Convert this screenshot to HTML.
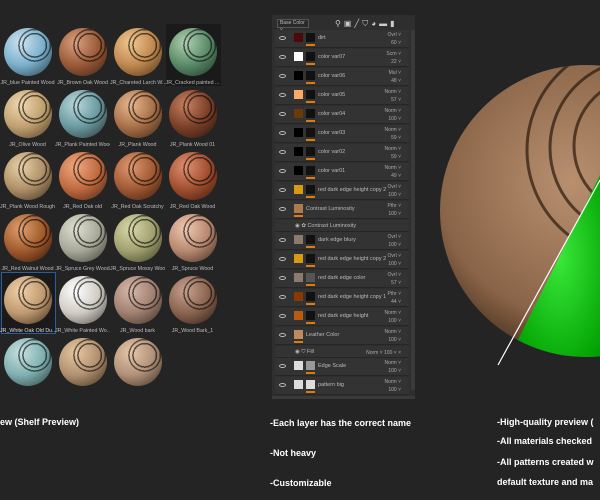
<!DOCTYPE html>
<html><head><style>
*{margin:0;padding:0;box-sizing:border-box}
body{width:600px;height:500px;background:#242424;position:relative;overflow:hidden;font-family:"Liberation Sans",sans-serif}
.s{position:absolute;width:48px;height:48px;border-radius:50%;
background:
radial-gradient(circle at 64% 36%, transparent 0 11px, rgba(0,0,0,.6) 11px 12.5px, transparent 12.5px 15px, rgba(0,0,0,.55) 15px 16.5px, transparent 16.5px),
radial-gradient(circle at 35% 30%, var(--l) 0, var(--c) 50%, var(--d) 100%);}
.lb{position:absolute;width:55px;text-align:center;font-size:5.3px;color:#bbb;white-space:nowrap;overflow:hidden;text-overflow:clip}
.sel{position:absolute;background:#1a1a1a}
.panel{position:absolute;left:272px;top:15px;width:143px;height:383px;background:#2e2e2e}
.row{position:absolute;left:275px;width:134px;height:18px;border-bottom:1px solid #262626;background:#333}
.eye{position:absolute;left:4px;top:6px;width:7px;height:4px;border:1px solid #bbb;border-radius:50%}
.t1,.t2{position:absolute;top:3px;width:9px;height:9px}
.t1{left:19px}.t2{left:31px;background:#111}
.bar{position:absolute;left:31px;top:14px;width:9px;height:2px;background:#e07a10}
.nm{position:absolute;left:43px;top:5px;font-size:5.5px;color:#bbb;white-space:nowrap}
.bm{position:absolute;right:8px;top:1px;font-size:5px;color:#aaa;text-align:right;line-height:8px}
.tx{position:absolute;color:#fff;font-weight:bold;font-size:9px;white-space:nowrap}
</style></head><body>

<div class="sel" style="left:166px;top:24px;width:55px;height:62px"></div>
<div class="sel" style="left:1px;top:272px;width:55px;height:62px;border:1px solid #2a5d9a"></div>

<div class="s" style="left:4px;top:28px;--l:#cfe3ef;--c:#7ab0cc;--d:#2a3a44"></div>
<div class="s" style="left:59px;top:28px;--l:#d9a080;--c:#9a5a38;--d:#3a2014"></div>
<div class="s" style="left:114px;top:28px;--l:#f0c890;--c:#c08850;--d:#4a3018"></div>
<div class="s" style="left:169px;top:28px;--l:#b0d0b0;--c:#5a8a68;--d:#1e3024"></div>
<div class="lb" style="left:0;top:80px">JR_blue Painted Wood</div>
<div class="lb" style="left:55px;top:80px">JR_Brown Oak Wood</div>
<div class="lb" style="left:110px;top:80px">JR_Chareted Larch W...</div>
<div class="lb" style="left:165px;top:80px">JR_Cracked painted ...</div>

<div class="s" style="left:4px;top:90px;--l:#f0d8b0;--c:#c0a070;--d:#4a3a24"></div>
<div class="s" style="left:59px;top:90px;--l:#b8d8dc;--c:#6a9aa0;--d:#2a3030"></div>
<div class="s" style="left:114px;top:90px;--l:#e8b890;--c:#a87048;--d:#3a2414"></div>
<div class="s" style="left:169px;top:90px;--l:#c88060;--c:#7a4028;--d:#2a140c"></div>
<div class="lb" style="left:0;top:142px">JR_Olive Wood</div>
<div class="lb" style="left:55px;top:142px">JR_Plank Painted Wood</div>
<div class="lb" style="left:110px;top:142px">JR_Plank Wood</div>
<div class="lb" style="left:165px;top:142px">JR_Plank Wood 01</div>

<div class="s" style="left:4px;top:152px;--l:#e8d0a8;--c:#b09068;--d:#3a2e20"></div>
<div class="s" style="left:59px;top:152px;--l:#f0a880;--c:#c06a40;--d:#4a2210"></div>
<div class="s" style="left:114px;top:152px;--l:#e09870;--c:#a05a34;--d:#3a1a0c"></div>
<div class="s" style="left:169px;top:152px;--l:#e09070;--c:#a05030;--d:#3a180a"></div>
<div class="lb" style="left:0;top:204px">JR_Plank Wood Rough</div>
<div class="lb" style="left:55px;top:204px">JR_Red Oak old</div>
<div class="lb" style="left:110px;top:204px">JR_Red Oak Scratchy</div>
<div class="lb" style="left:165px;top:204px">JR_Red Oak Wood</div>

<div class="s" style="left:4px;top:214px;--l:#e0a070;--c:#a05a2c;--d:#301408"></div>
<div class="s" style="left:59px;top:214px;--l:#e0e0d0;--c:#a8a898;--d:#3a3a34"></div>
<div class="s" style="left:114px;top:214px;--l:#d8d8a8;--c:#a0a070;--d:#3a3a24"></div>
<div class="s" style="left:169px;top:214px;--l:#f0c8b0;--c:#b88870;--d:#3a2a20"></div>
<div class="lb" style="left:0;top:266px">JR_Red Walnut Wood</div>
<div class="lb" style="left:55px;top:266px">JR_Spruce Grey Wood</div>
<div class="lb" style="left:110px;top:266px">JR_Spruce Mossy Wood</div>
<div class="lb" style="left:165px;top:266px">JR_Spruce Wood</div>

<div class="s" style="left:4px;top:276px;--l:#f0d0a8;--c:#c09a70;--d:#3a2c1c"></div>
<div class="s" style="left:59px;top:276px;--l:#ffffff;--c:#d0ccc4;--d:#4a4640"></div>
<div class="s" style="left:114px;top:276px;--l:#d8b8a8;--c:#a08070;--d:#3a2c24"></div>
<div class="s" style="left:169px;top:276px;--l:#c8a090;--c:#8a6450;--d:#2a1c14"></div>
<div class="lb" style="left:0;top:328px;color:#ddd">JR_White Oak Old Du...</div>
<div class="lb" style="left:55px;top:328px">JR_White Painted Wo...</div>
<div class="lb" style="left:110px;top:328px">JR_Wood bark</div>
<div class="lb" style="left:165px;top:328px">JR_Wood Bark_1</div>

<div class="s" style="left:4px;top:338px;--l:#c8e0e0;--c:#80b0b0;--d:#2a3a3a"></div>
<div class="s" style="left:59px;top:338px;--l:#e8c8a0;--c:#b09070;--d:#3a2c1c"></div>
<div class="s" style="left:114px;top:338px;--l:#e8c8a8;--c:#b09078;--d:#3a2c20"></div>

<div class="panel"></div>
<div style="position:absolute;left:277px;top:19px;width:32px;height:9px;border:1px solid #555;background:#2a2a2a;font-size:5px;color:#bbb;padding-left:2px;line-height:7px">Base Color ˅</div>
<div style="position:absolute;left:335px;top:19px;font-size:8px;color:#ccc;letter-spacing:3px">⚲▣╱⛉◕▬▮</div>
<div style="position:absolute;left:411px;top:30px;width:4px;height:360px;background:#3a3a3a"></div>

<div class="row" style="top:30px"><i class="eye"></i><i class="t1" style="background:#4a0a0a"></i><i class="t2"></i><i class="bar"></i><span class="nm">dirt</span><span class="bm">Ovrl ˅<br>60 ˅</span></div>
<div class="row" style="top:49px"><i class="eye"></i><i class="t1" style="background:#fff"></i><i class="t2"></i><i class="bar"></i><span class="nm">color var07</span><span class="bm">Scrn ˅<br>22 ˅</span></div>
<div class="row" style="top:68px"><i class="eye"></i><i class="t1" style="background:#000"></i><i class="t2"></i><i class="bar"></i><span class="nm">color var06</span><span class="bm">Mul ˅<br>48 ˅</span></div>
<div class="row" style="top:87px"><i class="eye"></i><i class="t1" style="background:#f8a868"></i><i class="t2"></i><i class="bar"></i><span class="nm">color var05</span><span class="bm">Norm ˅<br>57 ˅</span></div>
<div class="row" style="top:106px"><i class="eye"></i><i class="t1" style="background:#6a3a0a"></i><i class="t2"></i><i class="bar"></i><span class="nm">color var04</span><span class="bm">Norm ˅<br>100 ˅</span></div>
<div class="row" style="top:125px"><i class="eye"></i><i class="t1" style="background:#000"></i><i class="t2"></i><i class="bar"></i><span class="nm">color var03</span><span class="bm">Norm ˅<br>59 ˅</span></div>
<div class="row" style="top:144px"><i class="eye"></i><i class="t1" style="background:#000"></i><i class="t2"></i><i class="bar"></i><span class="nm">color var02</span><span class="bm">Norm ˅<br>59 ˅</span></div>
<div class="row" style="top:163px"><i class="eye"></i><i class="t1" style="background:#000"></i><i class="t2"></i><i class="bar"></i><span class="nm">color var01</span><span class="bm">Norm ˅<br>49 ˅</span></div>
<div class="row" style="top:182px"><i class="eye"></i><i class="t1" style="background:#d89a10"></i><i class="t2"></i><i class="bar"></i><span class="nm">red dark edge height copy 2</span><span class="bm">Ovrl ˅<br>100 ˅</span></div>
<div class="row" style="top:201px"><i class="eye"></i><i class="t1" style="background:#b07a50"></i><i class="bar" style="left:19px"></i><span class="nm" style="left:31px">Contrast Luminosity</span><span class="bm">Pthr ˅<br>100 ˅</span></div>
<div class="row" style="top:220px;height:12px"><span class="nm" style="left:20px;top:3px">◉ ✿ Contrast Luminosity</span></div>
<div class="row" style="top:232px"><i class="eye"></i><i class="t1" style="background:#8a7a70"></i><i class="t2"></i><i class="bar"></i><span class="nm">dark edge blury</span><span class="bm">Ovrl ˅<br>100 ˅</span></div>
<div class="row" style="top:251px"><i class="eye"></i><i class="t1" style="background:#d89a10"></i><i class="t2"></i><i class="bar"></i><span class="nm">red dark edge height copy 2</span><span class="bm">Ovrl ˅<br>100 ˅</span></div>
<div class="row" style="top:270px"><i class="eye"></i><i class="t1" style="background:#8a7a70"></i><i class="t2" style="background:#555"></i><i class="bar"></i><span class="nm">red dark edge color</span><span class="bm">Ovrl ˅<br>57 ˅</span></div>
<div class="row" style="top:289px"><i class="eye"></i><i class="t1" style="background:#8a3a00"></i><i class="t2"></i><i class="bar"></i><span class="nm">red dark edge height copy 1</span><span class="bm">Pthr ˅<br>44 ˅</span></div>
<div class="row" style="top:308px"><i class="eye"></i><i class="t1" style="background:#b85a10"></i><i class="t2"></i><i class="bar"></i><span class="nm">red dark edge height</span><span class="bm">Norm ˅<br>100 ˅</span></div>
<div class="row" style="top:327px"><i class="eye"></i><i class="t1" style="background:#c08a60"></i><i class="bar" style="left:19px"></i><span class="nm" style="left:31px">Leather Color</span><span class="bm">Norm ˅<br>100 ˅</span></div>
<div class="row" style="top:346px;height:12px"><span class="nm" style="left:20px;top:3px">◉ ⛉ Fill</span><span class="bm" style="top:3px">Norm ˅ 100 ˅ ×</span></div>
<div class="row" style="top:358px"><i class="eye"></i><i class="t1" style="background:#ddd"></i><i class="t2" style="background:#999"></i><i class="bar"></i><span class="nm">Edge Scale</span><span class="bm">Norm ˅<br>100 ˅</span></div>
<div class="row" style="top:377px"><i class="eye"></i><i class="t1" style="background:#ddd"></i><i class="t2" style="background:#ddd"></i><i class="bar"></i><span class="nm">pattern big</span><span class="bm">Norm ˅<br>100 ˅</span></div>
<div style="position:absolute;left:272px;top:396px;width:143px;height:3px;background:#3a3a3a"></div>

<svg style="position:absolute;left:420px;top:40px" width="180" height="340">
<defs>
<radialGradient id="w" cx="0.45" cy="0.4" r="0.65"><stop offset="0" stop-color="#b89070"/><stop offset="0.7" stop-color="#8a6448"/><stop offset="1" stop-color="#3a2818"/></radialGradient>
<radialGradient id="g" cx="0.6" cy="0.4" r="0.6"><stop offset="0" stop-color="#3ae83a"/><stop offset="1" stop-color="#00a000"/></radialGradient>
<clipPath id="c"><circle cx="166" cy="171" r="146"/></clipPath>
</defs>
<circle cx="166" cy="171" r="146" fill="url(#w)"/>
<g clip-path="url(#c)" fill="none" stroke="#2a1a0e" stroke-width="3" opacity=".7">
<circle cx="215" cy="110" r="108"/><circle cx="218" cy="108" r="88"/><circle cx="222" cy="106" r="68"/>
</g>
<polygon points="78,340 180,135 180,340" fill="url(#g)" clip-path="url(#c)"/>
<line x1="78" y1="325" x2="180" y2="140" stroke="#fff" stroke-width="1.2"/>
</svg>

<div class="tx" style="left:0;top:417px">ew (Shelf Preview)</div>
<div class="tx" style="left:270px;top:418px">-Each layer has the correct name</div>
<div class="tx" style="left:270px;top:448px">-Not heavy</div>
<div class="tx" style="left:270px;top:478px">-Customizable</div>
<div class="tx" style="left:497px;top:417px">-High-quality preview (</div>
<div class="tx" style="left:497px;top:436px">-All materials checked</div>
<div class="tx" style="left:497px;top:457px">-All patterns created w</div>
<div class="tx" style="left:497px;top:477px">default texture and ma</div>
</body></html>
